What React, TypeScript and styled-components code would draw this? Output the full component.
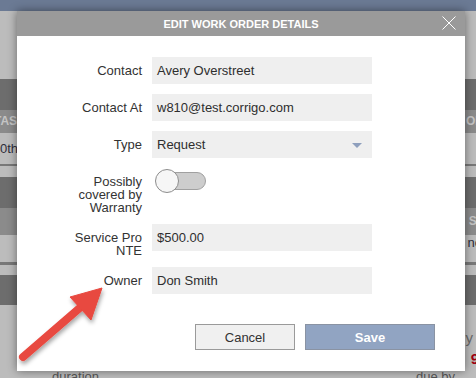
import styled, { createGlobalStyle } from "styled-components";

const GlobalStyle = createGlobalStyle`
  html, body {
    margin: 0;
    padding: 0;
    width: 476px;
    height: 378px;
    overflow: hidden;
    font-family: "Liberation Sans", Arial, sans-serif;
  }
`;

const Page = styled.div`
  position: relative;
  width: 476px;
  height: 378px;
  display: flex;
  flex-direction: column;
  background: #bcbcbc;
  overflow: hidden;
`;

const tones: Record<string, string> = {
  top: "#6b7a94",
  light: "#bcbcbc",
  dark: "#6d6d6d",
  mid: "#8b8b8b",
  rule: "#787878",
};

const Band = styled.div<{ $tone: string; $h: number; $top?: boolean }>`
  flex: 0 0 ${(p) => p.$h}px;
  background: ${(p) => tones[p.$tone]};
  display: flex;
  justify-content: space-between;
  align-items: ${(p) => (p.$top ? "flex-start" : "center")};
  font-size: 13px;
  line-height: 15px;
  color: #2a2a2a;
`;

const HeadText = styled.span<{ $edge?: boolean }>`
  font-size: 12px;
  font-weight: bold;
  color: #c4c4c4;
  margin-left: ${(p) => (p.$edge ? "-6px" : "0")};
  margin-right: ${(p) => (p.$edge ? "0" : "-8px")};
`;

const CellText = styled.span<{ $right?: boolean }>`
  color: #2e2e3a;
  margin-right: ${(p) => (p.$right ? "-6px" : "0")};
`;

const FootArea = styled.div`
  flex: 1;
  display: grid;
  grid-template-columns: 1fr auto;
  padding: 25px 0 0 52px;
  font-size: 13px;
  line-height: 15px;
  color: #555;
`;

const Duration = styled.span`
  align-self: end;
`;

const FootRight = styled.div`
  display: flex;
  flex-direction: column;
  align-items: flex-end;
`;

const Faint = styled.span`
  color: #6a6a6a;
  font-size: 15px;
  margin-right: 3px;
`;

const Red = styled.span`
  color: #a00010;
  font-weight: bold;
  font-size: 15px;
  margin: 6px -3px 0 0;
`;

const DueBy = styled.span`
  margin: 3px 21px 0 0;
`;

/* modal */

const Modal = styled.div`
  position: absolute;
  top: 11px;
  left: 17px;
  width: 448px;
  background: #fff;
  box-shadow: 0 0 9px rgba(0, 0, 0, 0.45);
  color: #333;
`;

const Header = styled.div`
  position: relative;
  height: 25px;
  background: #9a9a9a;
  display: flex;
  align-items: center;
  justify-content: center;
  color: #fff;
  font-size: 11px;
  font-weight: bold;
`;

const Close = styled.svg`
  position: absolute;
  right: 9px;
  top: 5px;
`;

const Body = styled.div`
  padding: 21px 30px 21px 53px;
`;

const Form = styled.div`
  display: grid;
  grid-template-columns: 72px 220px;
  column-gap: 10px;
  row-gap: 10px;
`;

const Label = styled.div`
  text-align: right;
  font-size: 13px;
  line-height: 13px;
  padding-top: 7px;
  color: #333;
`;

const Field = styled.div`
  position: relative;
  height: 27px;
  background: #efefef;
  display: flex;
  align-items: center;
  padding: 0 5px;
  font-size: 13px;
  color: #2e2e2e;
`;

const Caret = styled.span`
  position: absolute;
  right: 10px;
  top: 12px;
  width: 0;
  height: 0;
  border-left: 5px solid transparent;
  border-right: 5px solid transparent;
  border-top: 5px solid #8e9fbd;
`;

const Toggle = styled.div`
  position: relative;
  width: 51px;
  height: 24px;
  margin: 1px 0 0 3px;
`;

const Track = styled.div`
  position: absolute;
  left: 7px;
  top: 3px;
  width: 42px;
  height: 16px;
  border-radius: 9px;
  background: #cdcdcd;
  border: 1px solid #a0a0a0;
`;

const Knob = styled.div`
  position: absolute;
  left: 0;
  top: 0;
  width: 22px;
  height: 22px;
  border-radius: 50%;
  background: #f6f6f6;
  border: 1px solid #8c8c8c;
`;

const Actions = styled.div`
  display: flex;
  justify-content: flex-end;
  gap: 10px;
  margin-top: 30px;
`;

const Button = styled.button<{ $primary?: boolean }>`
  height: 26px;
  width: ${(p) => (p.$primary ? "130px" : "100px")};
  font-family: "Liberation Sans", Arial, sans-serif;
  font-size: 13px;
  font-weight: ${(p) => (p.$primary ? "bold" : "normal")};
  color: ${(p) => (p.$primary ? "#fff" : "#333")};
  background: ${(p) => (p.$primary ? "#91a4c2" : "#f0f0f0")};
  border: 1px solid ${(p) => (p.$primary ? "#8a93a3" : "#9a9a9a")};
  padding: 0;
`;

const Arrow = styled.svg`
  position: absolute;
  left: 0;
  top: 0;
  pointer-events: none;
`;

const App = () => {
  return (
    <>
      <GlobalStyle />
      <Page>
        <Band $tone="top" $h={11} />
        <Band $tone="light" $h={68} />
        <Band $tone="dark" $h={31} />
        <Band $tone="mid" $h={23}>
          <HeadText $edge>TASK</HeadText>
          <HeadText>ON</HeadText>
        </Band>
        <Band $tone="light" $h={31}>
          <CellText>0ther</CellText>
        </Band>
        <Band $tone="rule" $h={2} />
        <Band $tone="light" $h={11} />
        <Band $tone="dark" $h={31} />
        <Band $tone="mid" $h={27}>
          <span />
          <HeadText>ST</HeadText>
        </Band>
        <Band $tone="light" $h={27} $top>
          <span />
          <CellText $right>no</CellText>
        </Band>
        <Band $tone="rule" $h={3} />
        <Band $tone="light" $h={10} />
        <Band $tone="dark" $h={30} />
        <FootArea>
          <Duration>duration</Duration>
          <FootRight>
            <Faint>y</Faint>
            <Red>9</Red>
            <DueBy>due by</DueBy>
          </FootRight>
        </FootArea>

        <Modal>
          <Header>
            EDIT WORK ORDER DETAILS
            <Close width="14" height="14" viewBox="0 0 14 14">
              <path d="M0.5 0.5 L13.5 13.5 M13.5 0.5 L0.5 13.5" stroke="#fff" strokeWidth="1" />
            </Close>
          </Header>
          <Body>
            <Form>
              <Label>Contact</Label>
              <Field>Avery Overstreet</Field>
              <Label>Contact At</Label>
              <Field>w810@test.corrigo.com</Field>
              <Label>Type</Label>
              <Field>
                Request
                <Caret />
              </Field>
              <Label>Possibly covered by Warranty</Label>
              <Toggle>
                <Track />
                <Knob />
              </Toggle>
              <Label>Service Pro NTE</Label>
              <Field>$500.00</Field>
              <Label>Owner</Label>
              <Field>Don Smith</Field>
            </Form>
            <Actions>
              <Button>Cancel</Button>
              <Button $primary>Save</Button>
            </Actions>
          </Body>
        </Modal>

        <Arrow width="476" height="378" viewBox="0 0 476 378">
          <defs>
            <filter id="shadow" x="-20%" y="-20%" width="140%" height="140%">
              <feDropShadow dx="1" dy="3" stdDeviation="2" floodColor="#000" floodOpacity="0.35" />
            </filter>
          </defs>
          <g filter="url(#shadow)" fill="#e8483f" stroke="#e8483f">
            <line x1="23" y1="357" x2="82" y2="306" strokeWidth="8" strokeLinecap="round" />
            <polygon points="102,288 70,297 91,320" strokeWidth="1" strokeLinejoin="round" />
          </g>
        </Arrow>
      </Page>
    </>
  );
};

export default App;
